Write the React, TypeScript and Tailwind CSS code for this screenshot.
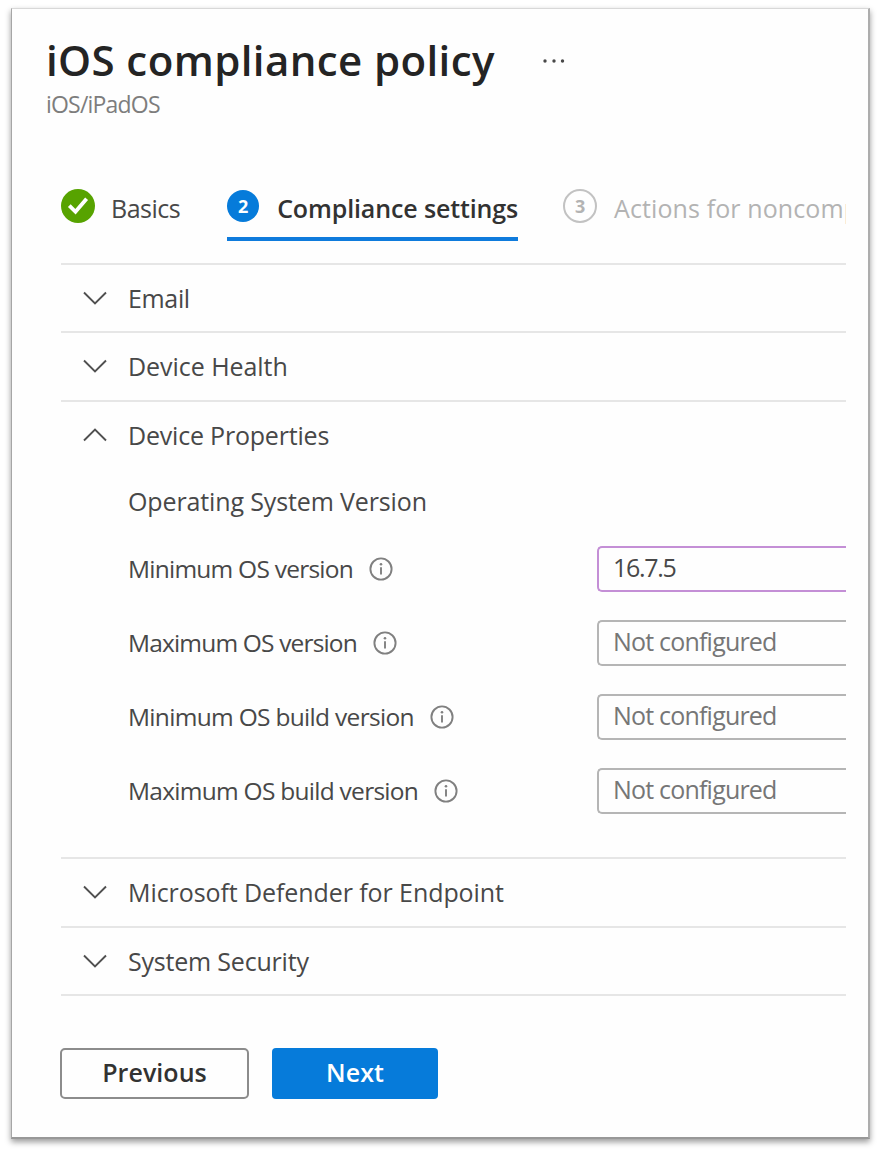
import * as React from 'react'
import { clsx } from 'clsx'

// ============================================================================
// ICONS
// ============================================================================

function CheckBadge() {
  return (
    <svg viewBox="0 0 34 34" className="size-[34px] shrink-0">
      <circle cx="17" cy="17" r="17" fill="#57a300" />
      <path d="M8.3 16.6l6.2 6.2L25.6 9.8" fill="none" stroke="#fff" strokeWidth="3.8" />
    </svg>
  )
}

function Chevron({ open = false }: { open?: boolean }) {
  return (
    <svg viewBox="0 0 24 14" className="h-[14px] w-6 shrink-0">
      <path
        d={open ? 'M1 12.5L12 1.5l11 11' : 'M1 1.5l11 11 11-11'}
        fill="none"
        stroke="#505050"
        strokeWidth="1.9"
      />
    </svg>
  )
}

function InfoIcon() {
  return (
    <svg viewBox="0 0 24 24" className="size-6 shrink-0">
      <circle cx="12" cy="12" r="10.6" fill="none" stroke="#808080" strokeWidth="1.9" />
      <path d="M12 10.2v7.3" stroke="#808080" strokeWidth="1.9" />
      <circle cx="12" cy="7.2" r="1.3" fill="#808080" />
    </svg>
  )
}

function MoreIcon() {
  return (
    <svg viewBox="0 0 22 4" className="h-1 w-[22px] shrink-0">
      <circle cx="2" cy="2" r="1.7" fill="#484848" />
      <circle cx="11" cy="2" r="1.7" fill="#484848" />
      <circle cx="19.5" cy="2" r="1.7" fill="#484848" />
    </svg>
  )
}

// ============================================================================
// ACCORDION
// ============================================================================

interface SectionProps {
  title: string
  titleClassName?: string
  open?: boolean
  className?: string
  children?: React.ReactNode
}

function Section({ title, titleClassName, open = false, className, children }: SectionProps) {
  return (
    <section className={clsx('border-t-2 border-[#e6e6e6]', className)}>
      <button type="button" className="flex h-[66px] w-full items-center gap-[21px] pl-[22px] text-left">
        <Chevron open={open} />
        <span className={titleClassName}>{title}</span>
      </button>
      {children}
    </section>
  )
}

// ============================================================================
// SETTING ROW
// ============================================================================

interface SettingRowProps {
  label: string
  labelClassName?: string
  value?: string
}

function SettingRow({ label, labelClassName, value }: SettingRowProps) {
  return (
    <div className="flex h-[46px] items-center">
      <div className="flex w-[469px] shrink-0 items-center gap-4">
        <span className={clsx('text-[24.5px]', labelClassName)}>{label}</span>
        <InfoIcon />
      </div>
      <div
        className={clsx(
          'flex h-[46px] flex-1 items-center rounded-l-[5px] border-2 border-r-0 pb-1 pl-[14px]',
          value ? 'border-[#c48fd6] text-[#484848]' : 'border-[#b5b5b5] text-[#767676]'
        )}
      >
        <span className={value ? 'tracking-[-1.3px]' : 'tracking-[-0.8px]'}>{value || 'Not configured'}</span>
      </div>
    </div>
  )
}

const settings: SettingRowProps[] = [
  { label: 'Minimum OS version', labelClassName: 'tracking-[-0.76px]', value: '16.7.5' },
  { label: 'Maximum OS version', labelClassName: 'tracking-[-0.83px]' },
  { label: 'Minimum OS build version', labelClassName: 'tracking-[-0.69px]' },
  { label: 'Maximum OS build version', labelClassName: 'tracking-[-0.73px]' },
]

// ============================================================================
// PAGE
// ============================================================================

export default function App() {
  return (
    <div className="h-[1153px] w-[880px] overflow-hidden bg-white pt-2 pl-[11px] font-['Open_Sans','Noto_Sans',sans-serif] text-[25px] leading-8 whitespace-nowrap text-[#484848]">
      <main className="h-[1131px] w-[859px] border-t border-r-2 border-b-2 border-l border-t-[#d8d8d8] border-r-[#adadad] border-b-[#989898] border-l-[#a6a6a6] bg-[#fefefe] pr-[22px] shadow-[0_3px_6px_rgba(0,0,0,0.4)]">
        <header className="pt-6 pl-[34px]">
          <div className="flex h-14 items-center gap-[48px]">
            <h1 className="pb-[3px] text-[42px] leading-[53px] font-semibold tracking-[0.4px] text-[#242424]">
              iOS compliance policy
            </h1>
            <MoreIcon />
          </div>
          <p className="text-[23px] leading-[30px] tracking-[-0.8px] text-[#7d7d7d]">iOS/iPadOS</p>
        </header>

        <div className="ml-[49px]">
          <nav className="mt-[66px] flex h-14 overflow-hidden">
            <div className="flex h-[42px] items-center gap-4">
              <CheckBadge />
              <span className="pt-1 tracking-[-0.5px]">Basics</span>
            </div>
            <div className="ml-[47px] flex h-14 shrink-0 gap-[18px] border-b-4 border-[#0f7bdc]">
              <span className="mt-[5px] flex size-8 items-center justify-center rounded-full bg-[#067bda] text-[18px] font-bold text-white">
                2
              </span>
              <span className="pt-[7px] font-semibold tracking-[-0.13px] text-[#323232]">Compliance settings</span>
            </div>
            <div className="ml-[45px] flex h-[42px] shrink-0 items-center gap-[17px] text-[#b3b3b3]">
              <span className="flex size-[34px] items-center justify-center rounded-full border-2 border-[#c2c2c2] text-[18px] font-bold">
                3
              </span>
              <span className="pt-1 tracking-[0.1px]">Actions for noncompliance</span>
            </div>
          </nav>

          <div className="mt-[22px] border-b-2 border-[#e6e6e6]">
            <Section title="Email" titleClassName="tracking-[-0.35px]" />
            <Section title="Device Health" titleClassName="tracking-[-0.05px]" />
            <Section title="Device Properties" titleClassName="tracking-[-0.2px]" className="mt-px" open>
              <div className="pb-[43px] pl-[67px]">
                <h2 className="flex h-[66px] items-center tracking-[-0.13px]">Operating System Version</h2>
                <div className="mt-[12px] flex flex-col gap-7">
                  {settings.map((s) => (
                    <SettingRow key={s.label} {...s} />
                  ))}
                </div>
              </div>
            </Section>
            <Section title="Microsoft Defender for Endpoint" titleClassName="tracking-[-0.08px]" />
            <Section title="System Security" titleClassName="tracking-[-0.2px]" className="mt-px" />
          </div>
        </div>

        <footer className="mt-[52px] ml-12 flex gap-[23px] font-semibold">
          <button
            type="button"
            className="h-[51px] w-[189px] rounded-[5px] border-2 border-[#8c8c8c] pb-1 tracking-[0.05px] text-[#323232]"
          >
            Previous
          </button>
          <button type="button" className="h-[51px] w-[166px] rounded-[4px] bg-[#067bda] pb-1 tracking-[0.1px] text-white">
            Next
          </button>
        </footer>
      </main>
    </div>
  )
}
